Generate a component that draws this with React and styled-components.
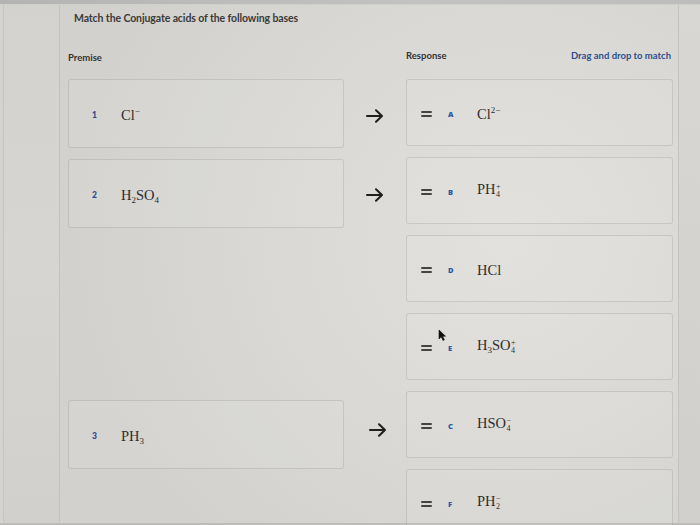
import React from "react";
import styled, { createGlobalStyle } from "styled-components";

const GlobalStyle = createGlobalStyle`
  html, body { margin: 0; padding: 0; background: #d6d5d1; }
  #root { width: 700px; height: 525px; overflow: hidden; }
  * { box-sizing: border-box; }
`;

const Page = styled.div`
  width: 700px;
  height: 525px;
  display: flex;
  flex-direction: column;
  background: #d4d3cf;
  font-family: Lato, "Open Sans", sans-serif;
  overflow: hidden;
`;

const TopBar = styled.div`
  height: 5px;
  flex: none;
  background: linear-gradient(90deg, #b4b4b2, #c2c2c0 60%, #bdbdbb);
  border-bottom: 1px solid #cfcfcc;
`;

const Body = styled.div`
  flex: 1;
  display: flex;
  min-height: 0;
  border-bottom: 2px solid #bdbcb8;
`;

const Sidebar = styled.div`
  flex: none;
  width: 57px;
  margin-left: 3px;
  border-left: 1px solid #c6c5c1;
  border-right: 1px solid #c3c2be;
  background: linear-gradient(180deg, #d3d2ce, #d6d5d1 50%, #d1d0cc);
`;

const Main = styled.main`
  flex: 1;
  min-width: 0;
  padding: 7px 0 0 8px;
  background: radial-gradient(ellipse 70% 80% at 72% 45%, #e0dfdb 0%, #dad9d5 50%, #d2d1cd 100%);
`;

const RightRail = styled.div`
  flex: none;
  width: 22px;
  border-left: 1px solid #c4c3bf;
  background: linear-gradient(180deg, #d8d7d3, #d0cfcb);
`;

const Title = styled.h1`
  margin: 0 0 0 6px;
  font-size: 10.5px;
  line-height: 12px;
  font-weight: 700;
  color: #3a3a3a;
  letter-spacing: -0.1px;
`;

const HeaderRow = styled.div`
  display: grid;
  grid-template-columns: 276px 62px 267px;
  grid-template-rows: 12px;
  margin-top: 25px;
  align-items: center;
`;

const Header = styled.div`
  grid-row: 1;
  grid-column: ${(p) => p.$col};
  justify-self: ${(p) => p.$align || "start"};
  margin-top: ${(p) => p.$drop || 0}px;
  font-size: 9.5px;
  font-weight: 700;
  color: ${(p) => (p.$accent ? "#2f4f8c" : "#333")};
  padding-right: ${(p) => (p.$accent ? 2 : 0)}px;
`;

const Board = styled.div`
  display: grid;
  grid-template-columns: 276px 62px 267px;
  grid-template-rows: repeat(6, 67px);
  row-gap: 11px;
  margin-top: 18px;
`;

const Card = styled.div`
  position: relative;
  grid-row: ${(p) => p.$row};
  grid-column: ${(p) => p.$col};
  display: flex;
  align-items: center;
  border: 1px solid rgba(120, 118, 112, 0.22);
  border-radius: 3px;
  background: rgba(255, 255, 255, 0.07);
`;

const PremiseCard = styled(Card)`
  height: 69px;
  margin-top: ${(p) => p.$shift || 0}px;
  padding-left: 23px;
`;

const ResponseCard = styled(Card)`
  padding-left: 14px;
`;

const Num = styled.span`
  width: 29px;
  font-size: 8.5px;
  font-weight: 900;
  color: #2a4b8d;
  margin-top: 3px;
`;

const Letter = styled.span`
  width: 45px;
  padding-left: 16px;
  font-family: "Open Sans", Lato, sans-serif;
  font-size: 7.5px;
  font-weight: 800;
  color: #2c58a6;
  margin-top: 3px;
`;

const Formula = styled.span`
  font-family: "Liberation Serif", "Times New Roman", serif;
  font-size: 14.5px;
  color: #2d2d2d;
  display: inline-flex;
  align-items: baseline;
  margin-top: 4px;
`;

const Sub = styled.span`
  font-size: 9px;
  position: relative;
  top: 3px;
`;

const Sup = styled.span`
  font-size: 9px;
  position: relative;
  top: -6px;
`;

const Stack = styled.span`
  display: inline-flex;
  flex-direction: column;
  align-items: flex-start;
  font-size: 8px;
  line-height: 8px;
  position: relative;
  top: -5px;
  margin-left: 0.5px;
`;

const Handle = styled.span`
  width: 11px;
  display: flex;
  flex-direction: column;
  gap: 2px;
  margin-top: 3px;
  &::before,
  &::after {
    content: "";
    height: 2px;
    background: #444;
    border-radius: 1px;
  }
`;

const ArrowCell = styled.div`
  grid-row: ${(p) => p.$row};
  grid-column: 2;
  display: flex;
  align-items: center;
  justify-content: center;
  padding-left: ${(p) => p.$nudge || 0}px;
  padding-top: ${(p) => p.$drop || 0}px;
`;

const Cursor = styled.svg`
  position: absolute;
  left: 31px;
  top: 15px;
`;

const Arrow = () => (
  <svg width="18" height="14" viewBox="0 0 18 14">
    <path d="M1 7 H16 M10 1.2 L16 7 L10 12.8" fill="none" stroke="#1e1e1e" strokeWidth="2" strokeLinecap="round" strokeLinejoin="round" />
  </svg>
);

const StackedIon = ({ sup, sub }) => (
  <Stack>
    <span>{sup}</span>
    <span>{sub}</span>
  </Stack>
);

const premises = [
  { n: "1", row: 1, body: <>Cl<Sup>−</Sup></> },
  { n: "2", row: 2, shift: 2, body: <>H<Sub>2</Sub>SO<Sub>4</Sub></> },
  { n: "3", row: 5, shift: 9, body: <>PH<Sub>3</Sub></> },
];

const responses = [
  { l: "A", body: <>Cl<Sup>2−</Sup></> },
  { l: "B", body: <>PH<StackedIon sup="+" sub="4" /></> },
  { l: "D", body: <>HCl</> },
  { l: "E", body: <>H<Sub>3</Sub>SO<StackedIon sup="+" sub="4" /></>, cursor: true },
  { l: "C", body: <>HSO<StackedIon sup="−" sub="4" /></> },
  { l: "F", body: <>PH<StackedIon sup="−" sub="2" /></> },
];

export default function App() {
  return (
    <>
      <GlobalStyle />
      <Page>
        <TopBar />
        <Body>
          <Sidebar />
          <Main>
            <Title>Match the Conjugate acids of the following bases</Title>
            <HeaderRow>
              <Header $col={1} $drop={4}>Premise</Header>
              <Header $col={3}>Response</Header>
              <Header $col={3} $align="end" $accent>Drag and drop to match</Header>
            </HeaderRow>
            <Board>
              {premises.map((p) => (
                <PremiseCard key={p.n} $row={p.row} $col={1} $shift={p.shift}>
                  <Num>{p.n}</Num>
                  <Formula>{p.body}</Formula>
                </PremiseCard>
              ))}
              <ArrowCell $row={1} $drop={6}><Arrow /></ArrowCell>
              <ArrowCell $row={2} $drop={8}><Arrow /></ArrowCell>
              <ArrowCell $row={5} $drop={10} $nudge={6}><Arrow /></ArrowCell>
              {responses.map((r, i) => (
                <ResponseCard key={r.l} $row={i + 1} $col={3}>
                  <Handle />
                  <Letter>{r.l}</Letter>
                  <Formula>{r.body}</Formula>
                  {r.cursor && (
                    <Cursor width="8" height="12" viewBox="0 0 8 12">
                      <path d="M1 1 L1 10 L3.2 7.8 L5 11.5 L6.4 10.8 L4.6 7.2 L7.5 7.2 Z" fill="#111" stroke="#111" strokeWidth="0.6" strokeLinejoin="round" />
                    </Cursor>
                  )}
                </ResponseCard>
              ))}
            </Board>
          </Main>
          <RightRail />
        </Body>
      </Page>
    </>
  );
}
